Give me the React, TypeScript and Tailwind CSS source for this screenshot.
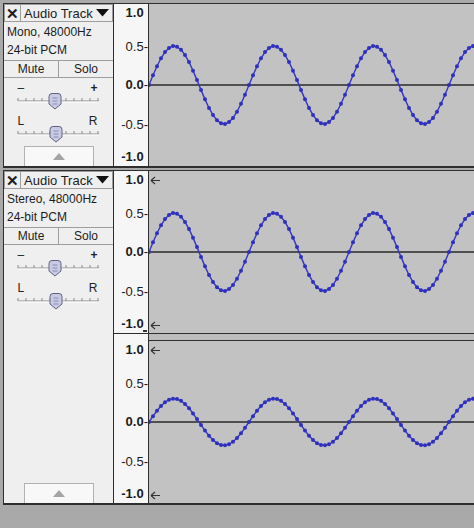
import * as React from "react";

const FONT = { fontFamily: '"Liberation Sans", Arial, sans-serif' };

type Label = { text: string; top: number; bold?: boolean; dash?: boolean };

const rulerLabels: Label[] = [
  { text: "1.0", top: 8, bold: true },
  { text: "0.5", top: 42, dash: true },
  { text: "0.0", top: 80, bold: true, dash: true },
  { text: "-0.5", top: 120, dash: true },
  { text: "-1.0", top: 152, bold: true },
];

function Ruler({ endMark }: { endMark?: boolean }) {
  return (
    <div className="relative w-[35px] h-full bg-[#f6f6f6] border-r border-[#2e2e2e] shrink-0">
      {rulerLabels.map((l) => (
        <div
          key={l.text}
          className={
            "absolute right-0 -translate-y-1/2 text-[13px] leading-none text-[#1a1a1a] " +
            (l.bold ? "font-bold" : "")
          }
          style={{ top: l.top }}
        >
          {l.text}
          <span className={l.dash ? "font-normal" : "font-normal text-transparent"}>-</span>
        </div>
      ))}
      {endMark && <div className="absolute right-[1px] bottom-[1px] w-[4px] h-[2px] bg-[#333]" />}
    </div>
  );
}

function Arrow() {
  return (
    <svg width={11} height={9}>
      <path d="M1 4.5 L10 4.5 M1 4.5 L5 1 M1 4.5 L5 8" stroke="#333" strokeWidth={1.1} fill="none" />
    </svg>
  );
}

function Wave({ amp, arrows }: { amp: number; arrows?: boolean }) {
  const w = 326;
  const h = 162;
  const cy = 81;
  const scale = 78;
  const pts: [number, number][] = [];
  for (let x = 0; x <= w + 4; x += 4) {
    const y = cy - Math.sin((2 * Math.PI * x) / 100) * amp * scale;
    pts.push([x, y]);
  }
  return (
    <div className="relative flex-1 h-full bg-[#c2c2c2] overflow-hidden">
      <svg width={w} height={h} className="block">
        <line x1={0} y1={cy} x2={w} y2={cy} stroke="#2a2a2a" strokeWidth={1.5} />
        <polyline
          points={pts.map((p) => p.join(",")).join(" ")}
          fill="none"
          stroke="#3434c4"
          strokeWidth={1.4}
        />
        {pts.map((p, i) => (
          <circle key={i} cx={p[0]} cy={p[1]} r={2} fill="#3030bf" />
        ))}
      </svg>
      {arrows && (
        <>
          <div className="absolute left-[1px] top-[5px] flex">
            <Arrow />
          </div>
          <div className="absolute left-[1px] bottom-[3px] flex">
            <Arrow />
          </div>
        </>
      )}
    </div>
  );
}

function Channel({ amp, arrows, endMark }: { amp: number; arrows?: boolean; endMark?: boolean }) {
  return (
    <div className="flex h-[162px]">
      <Ruler endMark={endMark} />
      <Wave amp={amp} arrows={arrows} />
    </div>
  );
}

function Slider({
  left,
  right,
  thumbX,
  boldRight,
}: {
  left: string;
  right: string;
  thumbX: number;
  boldRight?: boolean;
}) {
  return (
    <div className="relative h-[30px] w-[84px] mx-auto shrink-0">
      <span className="absolute left-[1px] top-0 text-[12px] leading-none text-[#222]">{left}</span>
      <span
        className={
          "absolute right-[3px] top-0 text-[12px] leading-none text-[#222] " + (boldRight ? "font-bold" : "")
        }
      >
        {right}
      </span>
      <svg width={84} height={30} className="absolute left-0 top-0">
        <line x1={1} y1={19} x2={82} y2={19} stroke="#8a8a8a" strokeWidth={1} />
        <line x1={1} y1={20} x2={82} y2={20} stroke="#ffffff" strokeWidth={1} />
        {[1, 9, 17, 25, 33, 49, 57, 65, 73, 81].map((x) => (
          <line key={x} x1={x} y1={16} x2={x} y2={19} stroke="#8a8a8a" strokeWidth={1} />
        ))}
        <g transform={`translate(${thumbX - 7},11)`}>
          <path
            d="M1 3.5 Q1 0.5 4 0.5 L10 0.5 Q13 0.5 13 3.5 L13 11 L7 16 L1 11 Z"
            fill="#c9cbe6"
            stroke="#62627e"
            strokeWidth={1}
          />
          <line x1={4.5} y1={5} x2={9.5} y2={5} stroke="#8c8cae" strokeWidth={1} />
          <line x1={4.5} y1={8} x2={9.5} y2={8} stroke="#8c8cae" strokeWidth={1} />
          <line x1={4.5} y1={11} x2={9.5} y2={11} stroke="#8c8cae" strokeWidth={1} />
        </g>
      </svg>
    </div>
  );
}

function TrackPanel({ info, height }: { info: string; height: number }) {
  return (
    <div
      className="flex flex-col w-[110px] bg-[#efefef] border-r border-[#2e2e2e] shrink-0 text-[12px] text-[#1c1c1c]"
      style={{ height }}
    >
      <div className="flex h-[18px] shrink-0">
        <div className="w-[17px] flex items-center justify-center border border-[#9e9e9e] text-[15px] font-bold leading-none">
          ✕
        </div>
        <div className="flex-1 flex items-center justify-between pl-[3px] pr-[3px] border border-l-0 border-[#9e9e9e] text-[13px] leading-none">
          <span>Audio Track</span>
          <svg width={13} height={8}>
            <path d="M0 0 L13 0 L6.5 7.5 Z" fill="#111" />
          </svg>
        </div>
      </div>
      <div className="pl-[3px] pt-[1px] pb-[1px] leading-[18px] text-[12px] shrink-0">
        <div>{info}</div>
        <div>24-bit PCM</div>
      </div>
      <div className="flex h-[18px] border-y border-[#9e9e9e] shrink-0">
        <div className="flex-1 flex items-center justify-center border-r border-[#9e9e9e]">Mute</div>
        <div className="flex-1 flex items-center justify-center">Solo</div>
      </div>
      <div className="pt-[4px] flex flex-col gap-[3px] shrink-0">
        <Slider left="–" right="+" thumbX={38} boldRight />
        <Slider left="L" right="R" thumbX={39} />
      </div>
      <div className="flex-1" />
      <div className="mx-auto w-[70px] h-[20px] shrink-0 bg-[#f8f8f8] border border-b-0 border-[#b2b2b2] flex items-center justify-center">
        <svg width={12} height={7}>
          <path d="M0 7 L6 0 L12 7 Z" fill="#a4a4a4" />
        </svg>
      </div>
    </div>
  );
}

export default function App() {
  return (
    <div className="w-[474px] h-[528px] bg-[#a9a9a9] pt-[3px] pl-[3px] overflow-hidden" style={FONT}>
      <div className="flex border-t border-l border-b-2 border-[#2e2e2e]">
        <TrackPanel info="Mono, 48000Hz" height={162} />
        <div className="flex-1 flex flex-col">
          <Channel amp={0.5} />
        </div>
      </div>
      <div className="h-[2px]" />
      <div className="flex border-t border-l border-b-2 border-[#2e2e2e]">
        <TrackPanel info="Stereo, 48000Hz" height={332} />
        <div className="flex-1 flex flex-col">
          <Channel amp={0.5} arrows endMark />
          <div className="flex h-[8px]">
            <div className="w-[35px] bg-[#f6f6f6] border-t border-r border-[#2e2e2e]" />
            <div className="flex-1 bg-[#bcbcbc] border-y border-[#2e2e2e]" />
          </div>
          <Channel amp={0.3} arrows />
        </div>
      </div>
    </div>
  );
}
